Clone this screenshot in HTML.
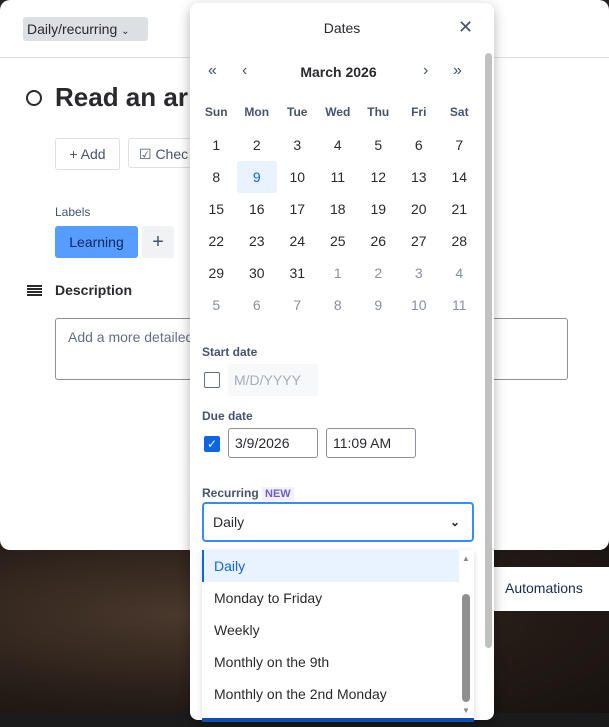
<!DOCTYPE html>
<html><head><style>
body{margin:0;width:609px;height:727px;overflow:hidden;background:#2a211c;font-family:"Liberation Sans",sans-serif;position:relative;color:#172b4d}
.bg{position:absolute;left:0;top:540px;width:609px;height:187px;background:radial-gradient(ellipse at 30% 40%,#4a382c,#221a15 60%,#16110e)}
.card{position:absolute;left:0;top:0;width:609px;height:550px;background:#fff;border-radius:10px}
.abs{position:absolute}
.pop{position:absolute;left:190px;top:3px;width:304px;height:717px;background:#fff;border-radius:8px;box-shadow:0 4px 12px rgba(0,0,0,.3)}
.cal td{width:40.5px;height:32px;text-align:center;font-size:14px;color:#292a2e;padding:0}
.cal th{font-size:12px;color:#44546f;font-weight:bold;height:32px}
.g{color:#8590a2!important}
.lbl{font-size:12px;font-weight:bold;color:#44546f}
.inp{position:absolute;border:1px solid #8c8f97;border-radius:3px;height:30px;box-sizing:border-box;font-size:14px;line-height:28px;padding-left:6px;color:#292a2e}
.opt{position:absolute;left:24px;font-size:14px;color:#292a2e}
</style></head><body>
<div class="bg"></div>
<div class="abs" style="left:490px;top:567px;width:119px;height:44px;background:#fff"></div>
<div class="abs" style="left:505px;top:580px;font-size:14px;color:#172b4d">Automations</div>
<div class="abs" style="left:0;top:713px;width:609px;height:14px;background:#1b1b1b"></div>
<div class="card">
 <div class="abs" style="left:0;top:57px;width:609px;height:1px;background:#dcdfe4"></div>
 <div class="abs" style="left:23px;top:17px;width:125px;height:24px;background:#dcdfe4;border-radius:3px;font-size:14px;line-height:24px;padding-left:4px;box-sizing:border-box;color:#292a2e">Daily/recurring <span style="font-size:10px">&#8964;</span></div>
 <div class="abs" style="left:26px;top:90px;width:12px;height:12px;border:2px solid #292a2e;border-radius:50%"></div>
 <div class="abs" style="left:55px;top:82px;font-size:26px;font-weight:bold;color:#292a2e">Read an ar</div>
 <div class="abs" style="left:55px;top:138px;width:63px;height:30px;border:1px solid #dcdfe4;border-radius:3px;font-size:14px;line-height:30px;text-align:center;color:#44546f">+ Add</div>
 <div class="abs" style="left:128px;top:138px;width:70px;height:30px;border:1px solid #dcdfe4;border-radius:3px;font-size:14px;line-height:30px;padding-left:10px;box-sizing:border-box;color:#44546f">&#9745; Chec</div>
 <div class="abs" style="left:55px;top:205px;font-size:12px;color:#44546f">Labels</div>
 <div class="abs" style="left:55px;top:226px;width:83px;height:32px;background:#579dff;border-radius:3px;font-size:14px;line-height:32px;text-align:center;color:#09265c">Learning</div>
 <div class="abs" style="left:142px;top:226px;width:32px;height:32px;background:#f1f2f4;border-radius:3px;font-size:20px;line-height:32px;text-align:center;color:#44546f">+</div>
 <div class="abs" style="left:27px;top:285px;width:15px;height:2px;background:#292a2e;box-shadow:0 3px 0 #292a2e,0 6px 0 #292a2e,0 9px 0 #292a2e"></div>
 <div class="abs" style="left:55px;top:282px;font-size:14px;font-weight:bold;color:#292a2e">Description</div>
 <div class="abs" style="left:55px;top:318px;width:513px;height:62px;border:1px solid #8c8f97;border-radius:3px;box-sizing:border-box;font-size:14px;color:#626f86;padding:10px 12px">Add a more detailed description…</div>
</div>
<div class="pop">
 <div class="abs" style="left:0;width:304px;top:17px;text-align:center;font-size:14px;color:#292a2e">Dates</div>
 <div class="abs" style="left:268px;top:14px;font-size:18px;color:#44546f">✕</div>
 <div class="abs" style="left:295px;top:50px;width:7px;height:595px;background:#c1c1c1;border-radius:4px"></div>
 <div class="abs" style="left:18px;top:59px;font-size:16px;color:#44546f">«</div>
 <div class="abs" style="left:52px;top:59px;font-size:16px;color:#44546f">‹</div>
 <div class="abs" style="left:0;width:297px;top:61px;text-align:center;font-size:14px;font-weight:bold;color:#292a2e">March 2026</div>
 <div class="abs" style="left:233px;top:59px;font-size:16px;color:#44546f">›</div>
 <div class="abs" style="left:263px;top:59px;font-size:16px;color:#44546f">»</div>
 <table class="cal abs" style="left:6px;top:92px;border-collapse:collapse">
 <tr><th>Sun</th><th>Mon</th><th>Tue</th><th>Wed</th><th>Thu</th><th>Fri</th><th>Sat</th></tr>
 <tr><td>1</td><td>2</td><td>3</td><td>4</td><td>5</td><td>6</td><td>7</td></tr>
 <tr><td>8</td><td style="background:#e9f2ff;color:#0c66e4;border-radius:3px">9</td><td>10</td><td>11</td><td>12</td><td>13</td><td>14</td></tr>
 <tr><td>15</td><td>16</td><td>17</td><td>18</td><td>19</td><td>20</td><td>21</td></tr>
 <tr><td>22</td><td>23</td><td>24</td><td>25</td><td>26</td><td>27</td><td>28</td></tr>
 <tr><td>29</td><td>30</td><td>31</td><td class="g">1</td><td class="g">2</td><td class="g">3</td><td class="g">4</td></tr>
 <tr><td class="g">5</td><td class="g">6</td><td class="g">7</td><td class="g">8</td><td class="g">9</td><td class="g">10</td><td class="g">11</td></tr>
 </table>
 <div class="abs lbl" style="left:12px;top:342px">Start date</div>
 <div class="abs" style="left:14px;top:369px;width:14px;height:14px;border:1.5px solid #626f86;border-radius:2px"></div>
 <div class="abs" style="left:38px;top:361px;width:90px;height:32px;background:#f7f8f9;border-radius:3px;font-size:14px;line-height:32px;padding-left:6px;box-sizing:border-box;color:#a5adba">M/D/YYYY</div>
 <div class="abs lbl" style="left:12px;top:406px">Due date</div>
 <div class="abs" style="left:14px;top:433px;width:16px;height:16px;background:#0c66e4;border-radius:2px;color:#fff;font-size:12px;line-height:16px;text-align:center">✓</div>
 <div class="inp" style="left:38px;top:425px;width:90px">3/9/2026</div>
 <div class="inp" style="left:136px;top:425px;width:90px">11:09 AM</div>
 <div class="abs lbl" style="left:12px;top:483px">Recurring <span style="background:#f3f0ff;color:#6e5dc6;padding:1px 3px;font-size:11px">NEW</span></div>
 <div class="abs" style="left:12px;top:499px;width:272px;height:40px;border:2px solid #388bff;border-radius:4px;box-sizing:border-box;font-size:14px;line-height:36px;padding-left:9px;color:#292a2e">Daily<span style="position:absolute;right:12px;font-size:12px;font-weight:bold">&#8964;</span></div>
 <div class="abs" style="left:12px;top:547px;width:272px;height:170px;background:#fff;box-shadow:0 2px 6px rgba(0,0,0,.15)">
  <div class="abs" style="left:0;top:0;width:257px;height:32px;background:#e9f2ff;border-left:2px solid #0c66e4;box-sizing:border-box"></div>
  <div class="opt" style="top:8px;left:12px;color:#0c66e4">Daily</div>
  <div class="opt" style="top:40px;left:12px">Monday to Friday</div>
  <div class="opt" style="top:72px;left:12px">Weekly</div>
  <div class="opt" style="top:104px;left:12px">Monthly on the 9th</div>
  <div class="opt" style="top:136px;left:12px">Monthly on the 2nd Monday</div>
  <div class="abs" style="left:260px;top:4px;font-size:8px;color:#888">▲</div>
  <div class="abs" style="left:260px;top:44px;width:8px;height:108px;background:#909090;border-radius:4px"></div>
  <div class="abs" style="left:260px;top:156px;font-size:8px;color:#888">▼</div>
  <div class="abs" style="left:0;top:168px;width:272px;height:4px;background:#0c4fb0"></div>
 </div>
</div>
</body></html>
